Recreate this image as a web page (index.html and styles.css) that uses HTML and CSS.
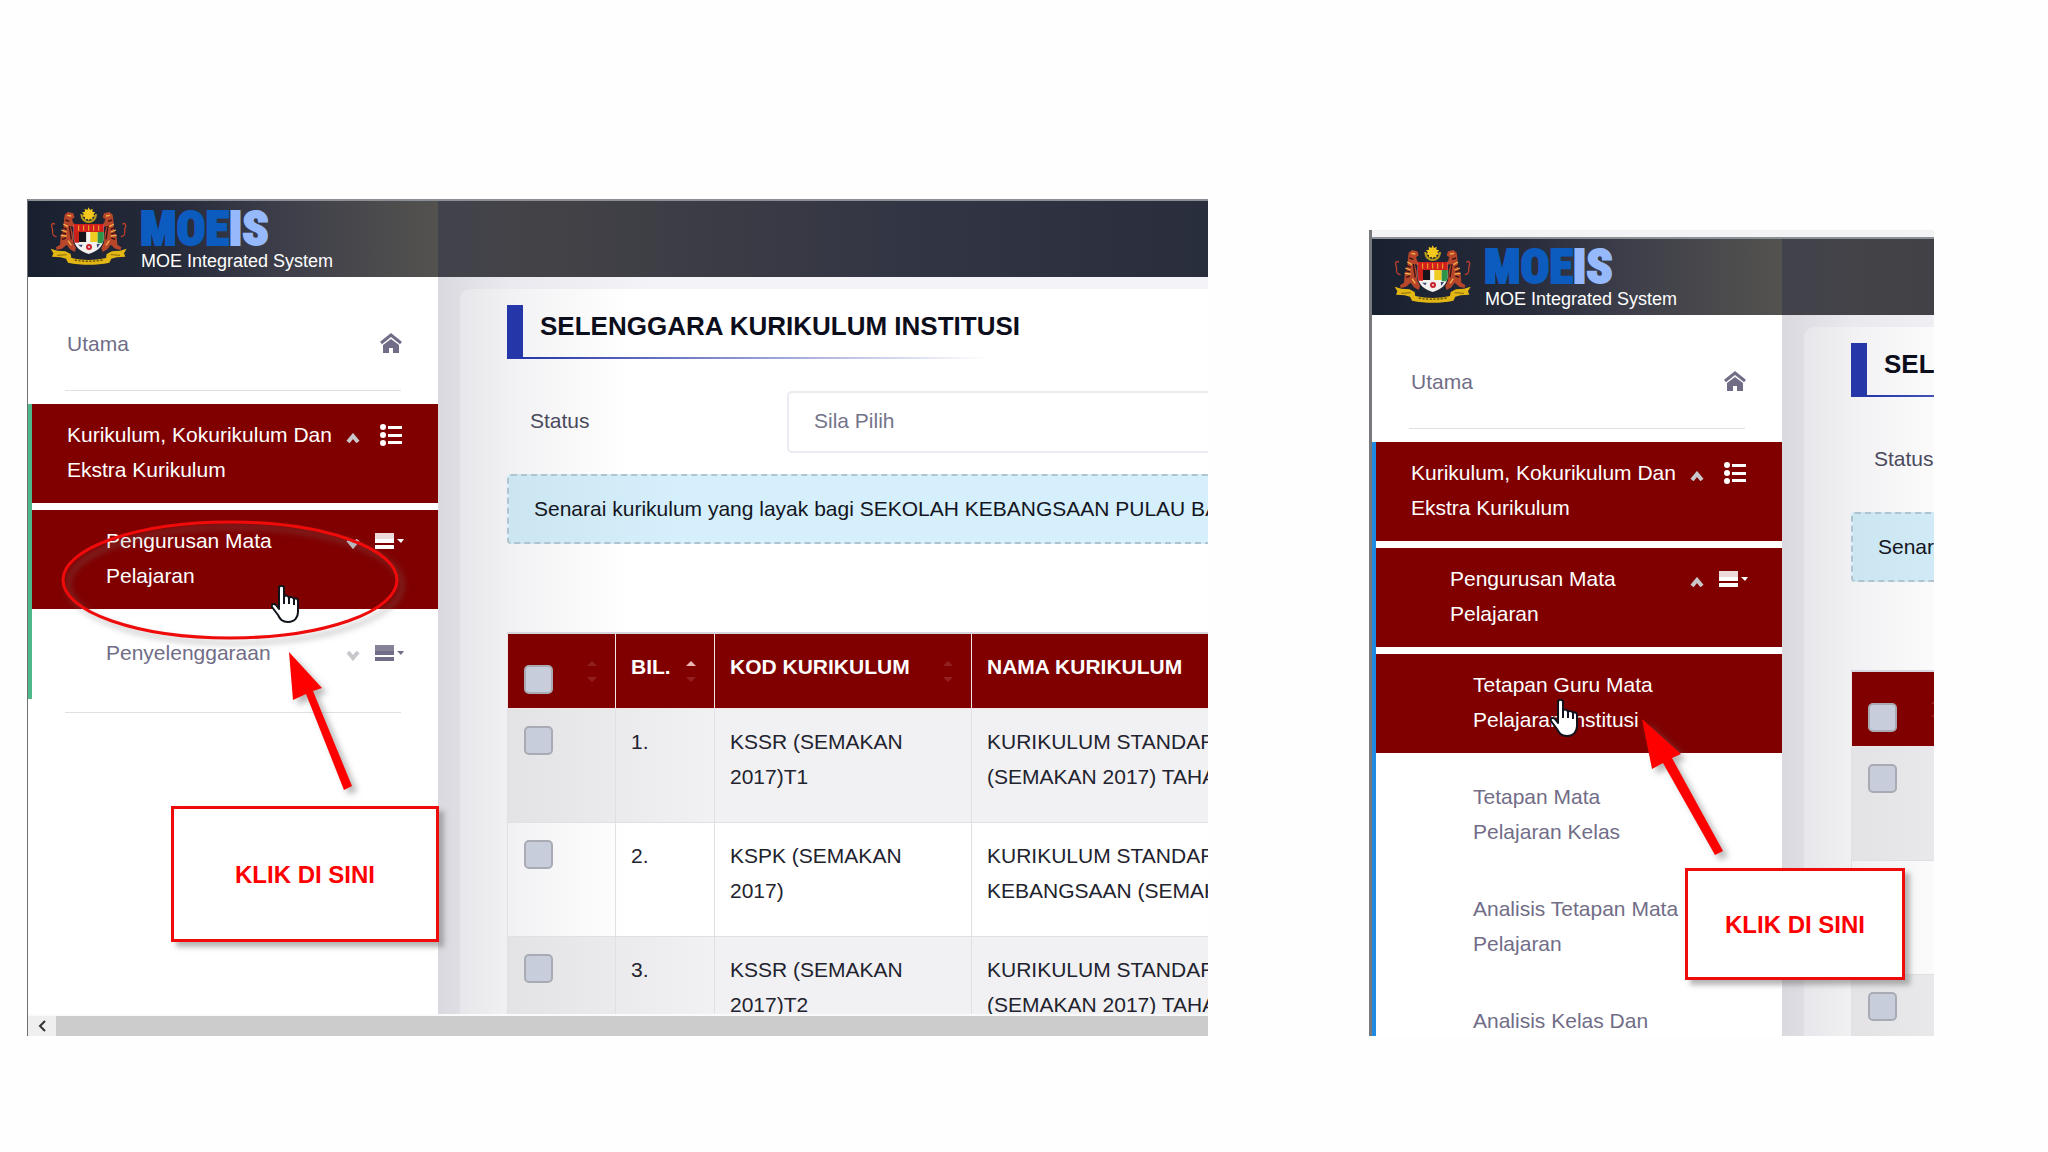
FILE: index.html
```html
<!DOCTYPE html>
<html lang="ms">
<head>
<meta charset="utf-8">
<meta name="viewport" content="width=device-width, initial-scale=1">
<title>MOEIS - Selenggara Kurikulum Institusi</title>
<link rel="stylesheet" href="styles.css">
</head>
<body>
<svg class="sprite" aria-hidden="true">
  <symbol id="emblem" viewBox="30 24 240 180">
    <g fill="none" stroke="#c2402c" stroke-width="4" stroke-linecap="round">
      <path d="M48 116C30 112 42 98 36 88c-4-8 2-14 8-10"/>
      <path d="M244 116c18-4 6-18 12-28 4-8-2-14-8-10"/>
    </g>
    <g id="tiger">
      <path fill="#b8462a" d="M74 50l10-8 16 4 4 12-8 6 4 12 8 4-4 8-12-4 6 22 2 28 8 16-4 12-14-8-10-14-14 12-16 4-2-8 12-8 2-24 8-24 2-26z"/>
      <path fill="none" stroke="#f2b04a" stroke-width="4" d="M82 52l12 2M70 78l14 8M64 96l16 6M62 112l18 2M84 128l10 14"/>
      <path fill="none" stroke="#3a1416" stroke-width="4" d="M76 66l12 4M68 88l12 6M64 104l14 4M66 124l12-4M88 84l6 40"/>
    </g>
    <use href="#tiger" transform="translate(292 0) scale(-1 1)"/>
    <path fill="none" stroke="#b59a1d" stroke-width="6" d="M124 48c0 32 44 32 44 0"/>
    <path fill="#f4c81c" d="M146 28l4 8 8-4-1 9 9 2-6 6 6 6-9 2 1 9-8-4-4 6-4-6-8 4 1-9-9-2 6-6-6-6 9-2-1-9 8 4z"/>
    <path fill="#f3f1ee" d="M101 80h90v40c0 26-22 42-45 48-23-6-45-22-45-48z"/>
    <path fill="#d3201c" d="M101 78h90v24h-90z"/>
    <path stroke="#f0b429" stroke-width="3" d="M116 82v16M131 82v16M146 82v16M161 82v16M176 82v16"/>
    <path fill="#c9201c" d="M101 102h16v32h-14z"/>
    <path fill="#17141a" d="M117 102h22v30h-22z"/>
    <path fill="#f6f4f0" d="M139 102h12v30h-12z"/>
    <path fill="#f0cc22" d="M151 102h22v30h-22z"/>
    <path fill="#2d9448" d="M173 102h18v18c0 6-2 12-5 16h-13z"/>
    <path fill="#3c4a7a" d="M114 140h14l-4 8zM170 138h10l-8 12z"/>
    <circle cx="147" cy="147" r="9" fill="#c8232f"/>
    <circle cx="147" cy="147" r="3" fill="#f7d8d8"/>
    <path fill="#e2b714" d="M32 152l20 6 24 2 16 8 2 12c34 8 70 8 104 0l2-12 16-8 24-2 20-6-8 14 4 10-26 2-16 4-6 12c-40 8-82 8-124 0l-6-12-16-4-26-2 4-10z"/>
    <path fill="none" stroke="#6a5208" stroke-width="4" stroke-dasharray="7 4" d="M104 186c28 5 56 5 84 0"/>
    <path fill="none" stroke="#5a430a" stroke-width="2" d="M52 172l28-2M212 170l28 2"/>
  </symbol>
  <symbol id="home" viewBox="0 0 22 20">
    <path fill="none" stroke="currentColor" stroke-width="3" d="M1 10L11 2l10 8"/>
    <path fill="currentColor" d="M11 6l8 6v8h-6v-5H9v5H3v-8z"/>
  </symbol>
  <symbol id="list" viewBox="0 0 22 22">
    <g fill="currentColor"><circle cx="3" cy="3" r="3"/><circle cx="3" cy="11" r="3"/><circle cx="3" cy="19" r="3"/><path d="M8 2h14v3H8zM8 10h14v3H8zM8 17h14v3H8z"/></g>
  </symbol>
  <symbol id="bars" viewBox="0 0 30 16">
    <path fill="currentColor" opacity=".85" d="M0 0h19v6H0z"/>
    <path fill="currentColor" d="M0 6h19v4H0zM0 12h19v4H0zM22 6h7l-3 4z"/>
  </symbol>
  <symbol id="up" viewBox="0 0 14 10"><path fill="none" stroke="currentColor" stroke-width="4" d="M2 9l5-6 5 6"/></symbol>
  <symbol id="down" viewBox="0 0 14 10"><path fill="none" stroke="currentColor" stroke-width="4" d="M2 1l5 6 5-6"/></symbol>
  <symbol id="hand" viewBox="0 0 28 38">
    <path fill="#fff" stroke="#10131c" stroke-width="2" stroke-linejoin="round" d="M8 24V3c0-3 5-3 5 0v9c1-2 4-2 5 1 1-2 4-1 5 1 1-1 4-1 4 2v11c0 5-3 10-10 10-6 0-8-3-10-7l-6-8c-1-3 2-4 4-2z"/>
    <path stroke="#10131c" stroke-width="2" d="M13 11v8M18 13v6M23 14v6"/>
  </symbol>
</svg>

<main class="stage">
  <section class="shot shot-wide">
    <header class="topbar">
      <div class="brand">
        <svg class="emblem"><use href="#emblem"/></svg>
        <div>
          <div class="brand-name">MOE<span>IS</span></div>
          <div class="brand-tag">MOE Integrated System</div>
        </div>
      </div>
    </header>
    <div class="body">
      <nav class="side">
        <a class="home" href="#"><span class="label">Utama</span><svg class="icon icon-home"><use href="#home"/></svg></a>
        <hr>
        <div class="menu menu-green">
          <a class="item active" href="#"><span class="label">Kurikulum, Kokurikulum Dan Ekstra Kurikulum</span><svg class="caret"><use href="#up"/></svg><svg class="icon icon-list"><use href="#list"/></svg></a>
          <a class="item active level-2" href="#"><span class="label">Pengurusan Mata Pelajaran</span><svg class="caret"><use href="#down"/></svg><svg class="icon icon-bars"><use href="#bars"/></svg></a>
          <div class="plain-items">
            <a class="item level-2" href="#"><span class="label">Penyelenggaraan</span><svg class="caret"><use href="#down"/></svg><svg class="icon icon-bars"><use href="#bars"/></svg></a>
          </div>
        </div>
        <hr>
      </nav>
      <div class="content">
        <div class="card">
          <h1>SELENGGARA KURIKULUM INSTITUSI</h1>
          <div class="field">
            <label for="status">Status</label>
            <select id="status"><option>Sila Pilih</option></select>
          </div>
          <p class="notice">Senarai kurikulum yang layak bagi SEKOLAH KEBANGSAAN PULAU BA</p>
          <table>
            <thead>
              <tr>
                <th class="col-check sort"><input type="checkbox" aria-label="Pilih semua"></th>
                <th class="col-no sort sort-asc">BIL.</th>
                <th class="col-code sort">KOD KURIKULUM</th>
                <th>NAMA KURIKULUM</th>
              </tr>
            </thead>
            <tbody>
              <tr><td><input type="checkbox" aria-label="Pilih 1"></td><td>1.</td><td>KSSR (SEMAKAN 2017)T1</td><td>KURIKULUM STANDAR<br>(SEMAKAN 2017) TAHA</td></tr>
              <tr><td><input type="checkbox" aria-label="Pilih 2"></td><td>2.</td><td>KSPK (SEMAKAN 2017)</td><td>KURIKULUM STANDAR<br>KEBANGSAAN (SEMAK</td></tr>
              <tr><td><input type="checkbox" aria-label="Pilih 3"></td><td>3.</td><td>KSSR (SEMAKAN 2017)T2</td><td>KURIKULUM STANDAR<br>(SEMAKAN 2017) TAHA</td></tr>
            </tbody>
          </table>
        </div>
      </div>
    </div>
    <div class="scrollbar">
      <button type="button" aria-label="Tatal ke kiri"><svg viewBox="0 0 8 12"><path fill="none" stroke="#333" stroke-width="2" d="M7 1L2 6l5 5"/></svg></button>
      <div class="thumb"></div>
    </div>
    <svg class="marks marks-wide" viewBox="27 199 440 640" aria-hidden="true">
      <g class="drop">
        <ellipse cx="230" cy="580" rx="167" ry="58" fill="none" stroke="#f00b0b" stroke-width="3"/>
        <path fill="#f00" d="M289 652l33 36-9 3 39 95-8 4-38-96-13 6z"/>
      </g>
      <use href="#hand" x="271" y="585" width="28" height="38"/>
    </svg>
    <div class="callout callout-wide">KLIK DI SINI</div>
  </section>

  <section class="shot shot-narrow">
    <header class="topbar">
      <div class="brand">
        <svg class="emblem"><use href="#emblem"/></svg>
        <div>
          <div class="brand-name">MOE<span>IS</span></div>
          <div class="brand-tag">MOE Integrated System</div>
        </div>
      </div>
    </header>
    <div class="body">
      <nav class="side">
        <a class="home" href="#"><span class="label">Utama</span><svg class="icon icon-home"><use href="#home"/></svg></a>
        <hr>
        <div class="menu menu-blue">
          <a class="item active" href="#"><span class="label">Kurikulum, Kokurikulum Dan Ekstra Kurikulum</span><svg class="caret"><use href="#up"/></svg><svg class="icon icon-list"><use href="#list"/></svg></a>
          <a class="item active level-2" href="#"><span class="label">Pengurusan Mata Pelajaran</span><svg class="caret"><use href="#up"/></svg><svg class="icon icon-bars"><use href="#bars"/></svg></a>
          <a class="item active level-3" href="#"><span class="label">Tetapan Guru Mata Pelajaran Institusi</span></a>
          <div class="plain-items">
            <a class="item level-3" href="#"><span class="label">Tetapan Mata Pelajaran Kelas</span></a>
            <a class="item level-3" href="#"><span class="label">Analisis Tetapan Mata Pelajaran</span></a>
            <a class="item level-3" href="#"><span class="label">Analisis Kelas Dan</span></a>
          </div>
        </div>
      </nav>
      <div class="content">
        <div class="card">
          <h1>SEL</h1>
          <div class="field">
            <label for="status-2">Status</label>
            <select id="status-2"><option>Sila Pilih</option></select>
          </div>
          <p class="notice">Senar</p>
          <table>
            <thead>
              <tr><th class="col-check sort"><input type="checkbox" aria-label="Pilih semua"></th><th></th></tr>
            </thead>
            <tbody>
              <tr><td><input type="checkbox" aria-label="Pilih 1"></td><td></td></tr>
              <tr><td><input type="checkbox" aria-label="Pilih 2"></td><td></td></tr>
              <tr><td><input type="checkbox" aria-label="Pilih 3"></td><td></td></tr>
            </tbody>
          </table>
        </div>
      </div>
    </div>
    <svg class="marks marks-narrow" viewBox="1369 230 400 640" aria-hidden="true">
      <use href="#hand" x="1550" y="699" width="28" height="38"/>
      <path class="drop" fill="#f00" d="M1642 719l39 35-9 4 51 93-8 4-52-92-11 6z"/>
    </svg>
    <div class="callout callout-narrow">KLIK DI SINI</div>
  </section>
</main>
</body>
</html>
```
FILE: styles.css
```css
* { box-sizing: border-box; }

body {
  margin: 0;
  background: #fefefe;
  color: #22232e;
  font: 21px/35px "Liberation Sans", Arial, sans-serif;
}

a { color: inherit; text-decoration: none; }

.sprite { position: absolute; width: 0; height: 0; }

.stage {
  display: grid;
  grid-template-columns: minmax(0, 1181fr) minmax(0, 565fr);
  grid-template-rows: minmax(0, 1fr);
  column-gap: 161px;
  height: 100vh;
  padding: 199px 114px 116px 27px;
}

.shot {
  position: relative;
  display: flex;
  flex-direction: column;
  overflow: hidden;
  background: #fff;
}
.shot-wide { border-left: 1px solid #6d7075; }
.shot-narrow {
  margin-top: 31px;
  padding-top: 7px;
  border-left: 3px solid #77797c;
  background: #f3f3f5;
}

/* Top bar */
.topbar {
  display: grid;
  grid-template-columns: 410px minmax(0, 1fr);
  flex: none;
  height: 78px;
  border-top: 2px solid #8b9096;
  background: linear-gradient(90deg, #42424c 410px, #434347 500px, #3b3b45 700px, #303443 920px, #292e3d 1180px);
}
.brand {
  display: flex;
  gap: 10px;
  padding: 5px 0 0 22px;
  background: linear-gradient(90deg, #182030, #262a39 35%, #3c3d49 60%, #54524f);
}
.emblem { width: 80px; height: 60px; }
.brand-name {
  color: #0c5cc0;
  font: 900 48px/46px Impact, "Liberation Sans Narrow", "Roboto Condensed", "Open Sans Condensed", "Liberation Sans", sans-serif;
  -webkit-text-stroke: 2px currentColor;
}
.brand-name span { color: #95b9fa; }
.brand-tag {
  padding-left: 1px;
  color: #fff;
  font-size: 18px;
  line-height: 18px;
}

/* Body columns */
.body {
  display: grid;
  grid-template-columns: 410px minmax(0, 1fr);
  flex: 1;
  min-height: 0;
  overflow: hidden;
}

/* Side menu */
.side { background: #fff; color: #716d87; }
.side hr { height: 1px; margin: 0 37px 13px; border: 0; background: #dfe0e5; }
.home, .item { display: flex; align-items: flex-start; padding-right: 33px; }
.home { padding-top: 49px; padding-bottom: 29px; padding-left: 39px; }
.label { flex: none; width: 272px; }
.home .icon { margin-left: auto; }
.icon { flex: none; margin-top: 7px; }
.icon-home { width: 22px; height: 20px; margin-right: 3px; }
.icon-list { width: 22px; height: 22px; margin: 7px 3px 0 auto; }
.icon-bars { width: 30px; height: 16px; margin: 10px 0 0 auto; }
.caret { flex: none; width: 14px; height: 10px; margin: 16px 0 0 7px; color: #c8c8cc; }

.menu { display: flex; flex-direction: column; gap: 7px; border-left: 4px solid; margin-bottom: 13px; }
.menu-green { border-color: #4fb88a; padding-bottom: 8px; }
.menu-blue { border-color: #1f8ae0; }
.item { padding-top: 21px; padding-bottom: 21px; padding-left: 35px; }
.item.active { padding-top: 13px; padding-bottom: 16px; background: #800000; color: #fff; }
.level-2 { padding-left: 74px; }
.level-2 .label { width: 233px; }
.level-3 { padding-left: 97px; }
.level-3 .label { width: 210px; }
.plain-items { margin-top: -2px; }

/* Content */
.content {
  overflow: hidden;
  padding: 12px 0 0 22px;
  background: linear-gradient(90deg, #d9d9df, #e9e9ef 70px, #f3f3f8 220px);
}
.card {
  min-width: 900px;
  height: 100%;
  padding: 16px 0 0 47px;
  border-top-left-radius: 10px;
  background: linear-gradient(90deg, #e7e7eb, #f3f3f5 60px, #fff 170px);
}
h1 {
  width: 480px;
  height: 54px;
  margin: 0;
  padding-left: 17px;
  border-left: 16px solid #2536a8;
  background: linear-gradient(90deg, #2536a8, #fff0) bottom / 100% 2px no-repeat;
  color: #0d0e1c;
  font-size: 26px;
  line-height: 42px;
  white-space: nowrap;
}
.field { display: flex; align-items: center; margin: 32px 0 21px; padding-left: 23px; color: #4a4a5c; }
.field label { width: 257px; padding-bottom: 4px; }
select {
  appearance: none;
  flex: 1;
  height: 62px;
  padding: 0 25px 4px;
  border: 2px solid #e9ebf1;
  border-radius: 5px;
  background: #fff;
  color: #74748a;
  font: inherit;
}
.notice {
  height: 70px;
  margin: 0 0 88px;
  padding: 15px 25px;
  border: 2px dashed #b1c4ce;
  border-radius: 4px;
  background: linear-gradient(90deg, #cbe5f1, #d5effc 170px);
  color: #14161f;
  white-space: nowrap;
}

table { width: 100%; table-layout: fixed; border-collapse: collapse; border-top: 2px solid #d5d6de; }
th, td { padding: 15px 15px 27px; border: 1px solid #dfe0e4; text-align: left; vertical-align: top; font-size: 21px; }
th { position: relative; height: 75px; padding-bottom: 0; border-color: #f0e4e6; background: #800000; color: #fff; }
td { height: 114px; }
td:last-child { white-space: nowrap; }
tbody tr:nth-child(odd) { background: linear-gradient(90deg, #e3e3e6, #f1f1f3 200px); }
.col-check { width: 108px; }
.col-no { width: 99px; }
.col-code { width: 257px; }
.sort::before, .sort::after {
  content: "";
  position: absolute;
  right: 18px;
  border: 5px solid transparent;
}
.sort::before { top: 22px; border-bottom-color: #932020; }
.sort::after { top: 43px; border-top-color: #932020; }
.sort-asc::before { border-bottom-color: #eab6b6; }

input[type="checkbox"] {
  appearance: none;
  display: block;
  width: 29px;
  height: 29px;
  margin: 2px 0 0 1px;
  border: 2px solid #a9abb4;
  border-radius: 5px;
  background: #c8cddb;
}
th input[type="checkbox"] { margin-top: 16px; }

/* Horizontal scroll bar */
.scrollbar { display: flex; flex: none; height: 22px; border-top: 2px solid #fafafa; background: #efefef; }
.scrollbar button { width: 28px; padding: 0; border: 0; background: none; line-height: 0; }
.scrollbar svg { width: 8px; height: 12px; }
.thumb { flex: 1; background: #cdcccd; }

/* Annotations drawn over the screens */
.marks { position: absolute; top: 0; height: 640px; pointer-events: none; }
.marks-wide { left: -1px; width: 440px; }
.marks-narrow { left: -3px; width: 400px; }
.drop { filter: drop-shadow(5px 5px 3px #7778); }
.callout {
  position: absolute;
  display: grid;
  place-items: center;
  border: 3px solid #f00b0b;
  background: #fff;
  box-shadow: 5px 5px 5px #7778;
  color: #f00;
  font-size: 24px;
  font-weight: 700;
}
.callout-wide { left: 143px; top: 607px; width: 268px; height: 136px; }
.callout-narrow { left: 313px; top: 638px; width: 220px; height: 112px; }
```
